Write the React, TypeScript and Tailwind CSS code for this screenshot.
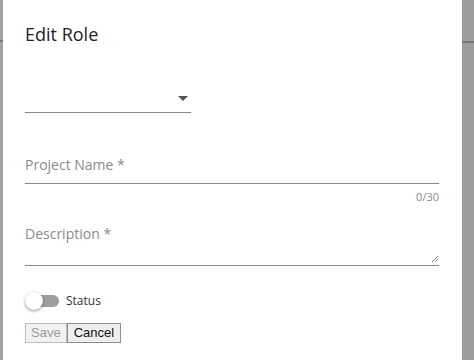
import React from "react";

export default function App() {
  return (
    <div className="flex h-[360px] w-[474px] overflow-hidden bg-[#9c9c9c]" style={{ fontFamily: '"Open Sans", "Noto Sans", sans-serif' }}>
      <div className="flex w-[3px] flex-col bg-[#a3a3a3]">
        <div className="mt-[40px] h-[2px] bg-[#7a7a7a]" />
      </div>
      <div className="flex w-[459px] flex-col bg-white pl-[22px] pr-[23px]">
        <h2 className="mt-[22px] text-[18px] leading-[24px] text-[#222]">Edit Role</h2>

        {/* select */}
        <div className="mt-[40px] flex h-[27px] w-[166px] items-center justify-end border-b border-[#8a8a8a] pr-[3px]">
          <svg width="10" height="5" viewBox="0 0 10 5" className="mt-[-2px]">
            <path d="M0 0h10L5 5z" fill="#555" />
          </svg>
        </div>

        {/* project name */}
        <div className="mt-[42px] border-b border-[#8a8a8a] pb-[8px] text-[14px] leading-[20px] text-[#8a8a8a]">
          Project Name *
        </div>
        <div className="mt-[6px] text-right text-[11px] leading-[14px] text-[#8a8a8a]">0/30</div>

        {/* description */}
        <div className="relative mt-[20px] h-[42px] border-b border-[#8a8a8a] text-[14px] leading-[20px] text-[#8a8a8a]">
          Description *
          <svg width="7" height="7" viewBox="0 0 7 7" className="absolute bottom-[3px] right-[1px]">
            <path d="M1 7L7 1M4 7L7 4" stroke="#888" strokeWidth="1" />
          </svg>
        </div>

        {/* status */}
        <div className="mt-[26px] flex items-center gap-[7px]">
          <div className="relative h-[18px] w-[34px]">
            <div className="absolute left-[4px] right-0 top-[3px] h-[12px] rounded-full bg-[#9e9e9e]" />
            <div className="absolute left-0 top-0 h-[18px] w-[18px] rounded-full bg-white shadow-[0_1px_3px_rgba(0,0,0,0.45)]" />
          </div>
          <span className="text-[12px] leading-[16px] text-[#333]">Status</span>
        </div>

        {/* buttons */}
        <div className="mt-[13px] flex" style={{ fontFamily: '"Liberation Sans", Arial, sans-serif' }}>
          <button className="h-[20px] border border-[#bdbdbd] bg-[#f2f2f2] px-[5px] text-[13px] leading-[16px] text-[#9a9a9a]">
            Save
          </button>
          <button className="h-[20px] border border-[#8f8f8f] bg-[#efefef] px-[6px] text-[13px] leading-[16px] text-[#111]">
            Cancel
          </button>
        </div>
      </div>
      <div className="flex w-[12px] flex-col bg-[#9c9c9c]">
        <div className="mt-[41px] h-[2px] bg-[#777]" />
      </div>
    </div>
  );
}
